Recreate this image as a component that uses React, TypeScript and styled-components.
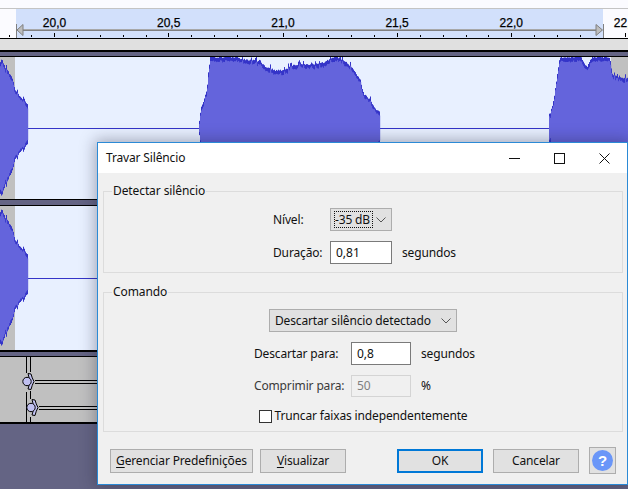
import React from 'react'
import styled, { createGlobalStyle } from 'styled-components'

const GlobalStyle = createGlobalStyle`
  html, body { margin: 0; padding: 0; background: #646484; }
  * { box-sizing: border-box; }
`

const UI_FONT = `"Noto Sans", "Liberation Sans", sans-serif`

const Screen = styled.div`
  position: relative;
  width: 628px;
  height: 489px;
  overflow: hidden;
  display: flex;
  flex-direction: column;
  background: #646484;
`

const TopStrip = styled.div`
  height: 9px;
  background: #fbfbff;
  border-bottom: 1px solid #c4c4c4;
`

const RulerBox = styled.div`
  height: 30px;
  background: #fbfbff;
  border-bottom: 1px solid #000;
  svg { display: block; }
`

const GrayBar = styled.div`
  height: 11px;
  background: #e0e0e0;
`

const Separator = styled.div<{ $h: number; $top?: number }>`
  height: ${p => p.$h}px;
  background: #646484;
  border-top: ${p => p.$top ?? 1}px solid #000;
  border-bottom: 1px solid #000;
`

const TrackBox = styled.div<{ $h: number }>`
  height: ${p => p.$h}px;
  background: #e8f0ff;
  svg { display: block; }
`

const GainPanel = styled.div`
  height: 67px;
  background: #c0c0c0;
  border-bottom: 2px solid #000;
  svg { display: block; }
`

const Dialog = styled.div`
  position: absolute;
  left: 97px;
  top: 142px;
  width: 531px;
  height: 343px;
  background: #f0f0f0;
  border: 1px solid #2b8ad6;
  box-shadow: 0 0 14px 2px rgba(30, 30, 50, 0.35);
  font: 12px/16px ${UI_FONT};
  color: #111;
  display: flex;
  flex-direction: column;
`

const TitleBar = styled.div`
  height: 30px;
  flex: none;
  background: #fff;
  display: flex;
  align-items: center;
  padding-left: 8px;
`

const TitleText = styled.div`
  flex: 1;
  letter-spacing: -0.15px;
`

const WinButton = styled.div`
  width: 45px;
  height: 30px;
  display: flex;
  align-items: center;
  justify-content: center;
  svg { display: block; }
`

const Body = styled.div`
  flex: 1;
  padding: 11px 4px 0 5px;
  display: flex;
  flex-direction: column;
`

const Group = styled.fieldset<{ $gap: number }>`
  margin: 0 0 ${p => p.$gap}px;
  padding: 10px 0 8px;
  border: 1px solid #dcdcdc;
  min-width: 0;
  display: flex;
  flex-direction: column;
  align-items: center;
`

const Legend = styled.legend`
  margin-left: 8px;
  padding: 0 1px;
  line-height: 14px;
  letter-spacing: -0.1px;
`

const FormGrid = styled.div<{ $cols: string }>`
  display: grid;
  grid-template-columns: ${p => p.$cols};
  align-items: center;
  row-gap: 10px;
`

const Label = styled.span<{ $dim?: boolean }>`
  letter-spacing: -0.15px;
  white-space: nowrap;
  color: ${p => (p.$dim ? '#3a3a3a' : '#111')};
`

const Unit = styled.span`
  margin-left: 10px;
  letter-spacing: -0.15px;
`

const Input = styled.div<{ $disabled?: boolean }>`
  height: ${p => (p.$disabled ? 22 : 23)}px;
  padding: 0 5px;
  display: flex;
  align-items: center;
  background: ${p => (p.$disabled ? '#f0f0f0' : '#fff')};
  border: 1px solid ${p => (p.$disabled ? '#d4d4d4' : '#7a7a7a')};
  color: ${p => (p.$disabled ? '#7f7f7f' : '#111')};
`

const Select = styled.div<{ $w: number }>`
  width: ${p => p.$w}px;
  height: 23px;
  padding: 0 2px 0 3px;
  display: flex;
  align-items: center;
  background: #e1e1e1;
  border: 1px solid #adadad;
`

const SelectText = styled.div<{ $focus?: boolean }>`
  flex: 1;
  height: 17px;
  line-height: 15px;
  padding-left: ${p => (p.$focus ? 0 : 1)}px;
  letter-spacing: -0.15px;
  white-space: nowrap;
  border: 1px ${p => (p.$focus ? 'dotted #111' : 'solid transparent')};
`

const Chevron = styled.svg`
  flex: none;
  width: 16px;
  height: 10px;
`

const CommandSelect = styled(Select)`
  margin-bottom: 10px;
`

const CheckRow = styled.label`
  margin-top: 12px;
  height: 14px;
  display: flex;
  align-items: center;
  gap: 3px;
  letter-spacing: -0.15px;
`

const CheckBox = styled.span`
  width: 13px;
  height: 13px;
  background: #fff;
  border: 1px solid #333;
`

const Footer = styled.div`
  margin-top: 15px;
  padding: 0 7px 0 7px;
  display: flex;
  align-items: center;
`

const Button = styled.div<{ $w: number; $default?: boolean; $ml?: number }>`
  width: ${p => p.$w}px;
  height: 24px;
  margin-left: ${p => p.$ml ?? 0}px;
  display: flex;
  align-items: center;
  justify-content: center;
  background: #e1e1e1;
  border: ${p => (p.$default ? '2px solid #0078d7' : '1px solid #adadad')};
  letter-spacing: -0.15px;
  white-space: nowrap;
  u { text-underline-offset: 2px; }
`

const HelpButton = styled.div`
  width: 27px;
  height: 27px;
  margin-left: 10px;
  display: flex;
  align-items: center;
  justify-content: center;
  background: #e1e1e1;
  border: 1px solid #adadad;
`

const HelpDot = styled.div`
  width: 21px;
  height: 21px;
  border-radius: 50%;
  background: #6a96f8;
  color: #fff;
  font: bold 15px/21px "Liberation Sans", sans-serif;
  text-align: center;
`

// seeded noise so the wave looks the same on every load
const makeRand = (seed: number) => {
  let s = seed
  return () => {
    s = (s * 1103515245 + 12345) & 0x7fffffff
    return s / 0x7fffffff
  }
}

// top edge of each wave burst as [x, y], y in page pixels, centre line at 128
const BURSTS: [number, number][][] = [
  [[0, 62], [7, 70], [13, 80], [15, 90], [20, 97], [27, 104], [28, 105]],
  [[199, 128], [200, 115], [203, 104], [207, 90], [209, 72], [210, 58], [238, 58], [242, 60], [260, 62], [265, 67], [275, 71], [285, 71], [292, 66], [300, 65], [314, 65], [325, 63], [332, 58], [338, 58], [345, 62], [352, 68], [360, 80], [364, 95], [370, 100], [376, 110], [380, 112]],
  [[549, 120], [554, 100], [557, 78], [560, 58], [581, 58], [583, 61], [587, 68], [591, 60], [592, 58], [609, 58], [611, 62], [612, 75], [618, 78], [628, 79]],
]

const edgeAt = (burst: [number, number][], x: number) => {
  for (let i = 1; i < burst.length; i++) {
    const [x0, y0] = burst[i - 1]
    const [x1, y1] = burst[i]
    if (x <= x1) return y0 + ((y1 - y0) * (x - x0)) / (x1 - x0)
  }
  return burst[burst.length - 1][1]
}

const Waveform = ({ height, seed }: { height: number; seed: number }) => {
  const center = Math.floor(height / 2)
  const rand = makeRand(seed)
  const peaks: React.ReactNode[] = []
  const rms: React.ReactNode[] = []

  BURSTS.forEach(burst => {
    const start = burst[0][0]
    const end = burst[burst.length - 1][0]
    for (let x = start; x < end; x++) {
      const amp = 128 - edgeAt(burst, x + 0.5)
      const spike = rand()
      const extra = spike > 0.82 ? 2 + rand() * 3 : rand() * 1.5
      const up = Math.min(center, amp + extra)
      const shrink = end <= 28 ? 1 - 0.012 * x : 1
      const down = Math.min(center, amp * shrink + extra)
      const flat = amp > 52
      const band = flat ? 3 + rand() * 2 : 2 + rand() * 3
      peaks.push(<rect key={x} x={x} y={center - up} width={1} height={up + down} fill="#3434c8" />)
      const inner = up - band
      const innerDown = down - band
      if (inner > 0 && innerDown > 0) {
        rms.push(<rect key={x} x={x} y={center - inner} width={1.2} height={inner + innerDown} fill="#6464dc" />)
      }
    }
  })

  return (
    <svg width={628} height={height}>
      <rect x={0} y={0} width={15} height={height} fill="#c0c0c0" />
      <rect x={611} y={0} width={17} height={height} fill="#c0c0c0" />
      <rect x={0} y={center} width={628} height={1} fill="#3434c8" />
      {peaks}
      {rms}
    </svg>
  )
}

const RULER_TOP = 9
const PX_PER_STEP = 22.85
const TIME_LABELS = ['20,0', '20,5', '21,0', '21,5', '22,0', '22,5']

const Ruler = () => {
  const ticks: React.ReactNode[] = []
  for (let i = -2; i < 28; i++) {
    const x = Math.round(54.2 + i * PX_PER_STEP)
    const major = i % 5 === 0
    ticks.push(
      <rect key={i} x={x} y={(major ? 33 : 35) - RULER_TOP} width={1} height={major ? 4 : 2} fill="#000" />
    )
  }
  return (
    <svg width={628} height={29}>
      <rect x={16} y={0} width={587} height={29} fill="#d2e0fb" />
      {TIME_LABELS.map((t, i) => (
        <text
          key={t}
          x={54.5 + i * 114.2}
          y={27 - RULER_TOP}
          textAnchor="middle"
          fontFamily='"Liberation Sans", sans-serif'
          fontSize={12}
          fill="#000"
          stroke="#000"
          strokeWidth={0.25}
        >
          {t}
        </text>
      ))}
      {ticks}
      <rect x={17} y={20} width={585} height={1} fill="#a8a8a8" />
      <rect x={17} y={21} width={585} height={1} fill="#808080" />
      <rect x={16} y={15} width={1} height={14} fill="#808080" />
      <rect x={603} y={15} width={1} height={14} fill="#808080" />
      <polygon points="17,21 23,15.5 23,26.5" fill="#bdbdbd" stroke="#808080" />
      <polygon points="602.5,21 596,15.5 596,26.5" fill="#bdbdbd" stroke="#808080" />
    </svg>
  )
}

const Thumb = ({ dx, dy }: { dx: number; dy: number }) => (
  <g transform={`translate(${dx} ${dy})`}>
    <path
      d="M28 16.5 L31 17 Q32 21 34 24.5 Q32 28 31 32.5 L28 32 L29 28.5 L28 24.5 L29 20.5 Z"
      fill="#c0c0f0"
      stroke="#000"
    />
    <circle cx={27} cy={24.5} r={4.2} fill="#c0c0f0" stroke="#000" />
  </g>
)

const GainSliders = () => (
  <svg width={100} height={65}>
    <rect x={26} y={0} width={1} height={16} fill="#000" />
    <rect x={30} y={0} width={1} height={15} fill="#000" />
    <rect x={26} y={35} width={1} height={30} fill="#000" />
    <rect x={30} y={34} width={1} height={8} fill="#000" />
    <rect x={30} y={60} width={1} height={5} fill="#000" />
    <rect x={35} y={23} width={65} height={1} fill="#000" />
    <rect x={35} y={26} width={65} height={1} fill="#000" />
    <rect x={39} y={49} width={61} height={1} fill="#000" />
    <rect x={39} y={52} width={61} height={1} fill="#000" />
    <Thumb dx={0} dy={0} />
    <Thumb dx={4} dy={26} />
  </svg>
)

const ChevronIcon = () => (
  <Chevron viewBox="0 0 16 10">
    <polyline points="3.5,2.5 8,7 12.5,2.5" fill="none" stroke="#555" strokeWidth={1} />
  </Chevron>
)

export default function App() {
  return (
    <Screen>
      <GlobalStyle />
      <TopStrip />
      <RulerBox>
        <Ruler />
      </RulerBox>
      <GrayBar />
      <Separator $h={7} $top={2} />
      <TrackBox $h={142}>
        <Waveform height={142} seed={7} />
      </TrackBox>
      <Separator $h={7} />
      <TrackBox $h={144}>
        <Waveform height={144} seed={7} />
      </TrackBox>
      <Separator $h={7} $top={2} />
      <GainPanel>
        <GainSliders />
      </GainPanel>

      <Dialog>
        <TitleBar>
          <TitleText>Travar Silêncio</TitleText>
          <WinButton>
            <svg width={11} height={11}><rect x={0} y={5} width={11} height={1} fill="#111" /></svg>
          </WinButton>
          <WinButton>
            <svg width={11} height={11}><rect x={0.5} y={0.5} width={10} height={10} fill="none" stroke="#111" /></svg>
          </WinButton>
          <WinButton>
            <svg width={11} height={11}><path d="M0.5 0.5 L10.5 10.5 M10.5 0.5 L0.5 10.5" stroke="#111" fill="none" /></svg>
          </WinButton>
        </TitleBar>
        <Body>
          <Group $gap={12}>
            <Legend>Detectar silêncio</Legend>
            <FormGrid $cols="57px 62px 61px">
              <Label>Nível:</Label>
              <Select $w={62}>
                <SelectText $focus>-35 dB</SelectText>
                <ChevronIcon />
              </Select>
              <span />
              <Label>Duração:</Label>
              <Input>0,81</Input>
              <Unit>segundos</Unit>
            </FormGrid>
          </Group>
          <Group $gap={0}>
            <Legend>Comando</Legend>
            <CommandSelect $w={188}>
              <SelectText>Descartar silêncio detectado</SelectText>
              <ChevronIcon />
            </CommandSelect>
            <FormGrid $cols="97px 60px 61px">
              <Label>Descartar para:</Label>
              <Input>0,8</Input>
              <Unit>segundos</Unit>
              <Label $dim>Comprimir para:</Label>
              <Input $disabled>50</Input>
              <Unit>%</Unit>
            </FormGrid>
            <CheckRow>
              <CheckBox />
              Truncar faixas independentemente
            </CheckRow>
          </Group>
          <Footer>
            <Button $w={143}><span><u>G</u>erenciar Predefinições</span></Button>
            <Button $w={86} $ml={7}><span><u>V</u>isualizar</span></Button>
            <Button $w={86} $ml={51} $default>OK</Button>
            <Button $w={86} $ml={10}>Cancelar</Button>
            <HelpButton><HelpDot>?</HelpDot></HelpButton>
          </Footer>
        </Body>
      </Dialog>
    </Screen>
  )
}
